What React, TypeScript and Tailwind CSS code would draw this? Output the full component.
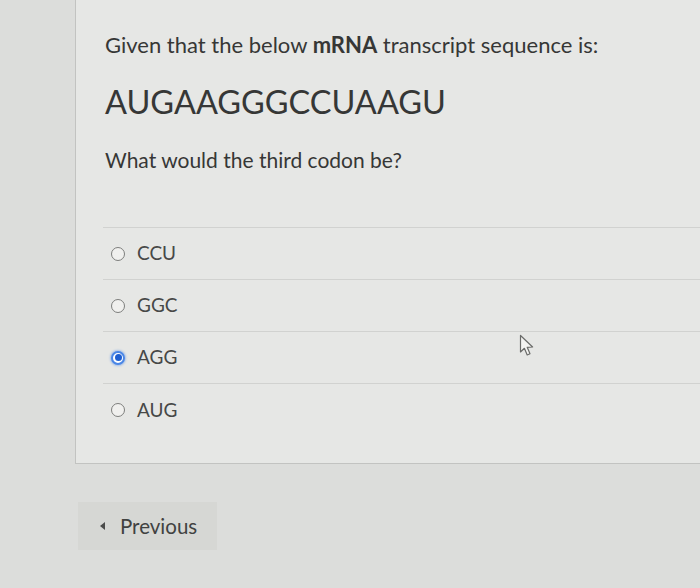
import { useState } from "react";

const options = ["CCU", "GGC", "AGG", "AUG"];

function Cursor() {
  return (
    <svg width="18" height="25" viewBox="0 0 18 25" className="absolute left-[519px] top-[334px]">
      <path
        d="M1.5 1.5 L1.5 18 L5.4 14.3 L8.2 21 L11 19.8 L8.2 13.3 L13.6 13 Z"
        fill="#f4f4f2"
        stroke="#6b6c6a"
        strokeWidth="1.2"
        strokeLinejoin="round"
      />
    </svg>
  );
}

export default function App() {
  const [selected, setSelected] = useState("AGG");

  return (
    <div className="relative h-[588px] w-[700px] overflow-hidden bg-[#dcdddb] font-['Lato',sans-serif] text-[#363736]">
      <div className="ml-[75px] h-[464px] border-b border-l border-[#c2c3c1] bg-[#e6e7e5] pl-[29px] pt-[31px]">
        <p className="text-[22px] leading-[28px]">
          Given that the below <span className="font-bold">mRNA</span> transcript sequence is:
        </p>
        <p className="mt-[23px] text-[32.5px] leading-[40px]">AUGAAGGGCCUAAGU</p>
        <p className="mt-[24px] text-[21px] leading-[28px]">What would the third codon be?</p>

        <div className="ml-[-2px] mt-[53px] border-t border-[#d1d2d0]">
          {options.map((opt, i) => (
            <label
              key={opt}
              className={
                "flex h-[52px] cursor-pointer items-center gap-[12px] pl-[8px] " +
                (i < options.length - 1 ? "border-b border-[#d1d2d0]" : "")
              }
              onClick={() => setSelected(opt)}
            >
              {selected === opt ? (
                <span className="flex h-[14px] w-[14px] items-center justify-center rounded-full border-2 border-[#4a86e6] bg-white shadow-[0_0_2px_1px_rgba(80,140,230,0.45)]">
                  <span className="h-[7px] w-[7px] rounded-full bg-[#1f5fd0]" />
                </span>
              ) : (
                <span className="h-[14px] w-[14px] rounded-full border-[1.5px] border-[#7d7e7c] bg-[#f0f0ee]" />
              )}
              <span className="text-[19px] text-[#474847]">{opt}</span>
            </label>
          ))}
        </div>
      </div>

      <div className="pl-[78px] pt-[38px]">
        <button className="flex h-[48px] w-[139px] items-center gap-[15px] bg-[#d6d7d4] pl-[22px] text-[20.5px] text-[#414241]">
          <svg width="5" height="8" viewBox="0 0 5 8">
            <path d="M5 0 L0 4 L5 8 Z" fill="#4a4b4a" />
          </svg>
          Previous
        </button>
      </div>

      <Cursor />
    </div>
  );
}
